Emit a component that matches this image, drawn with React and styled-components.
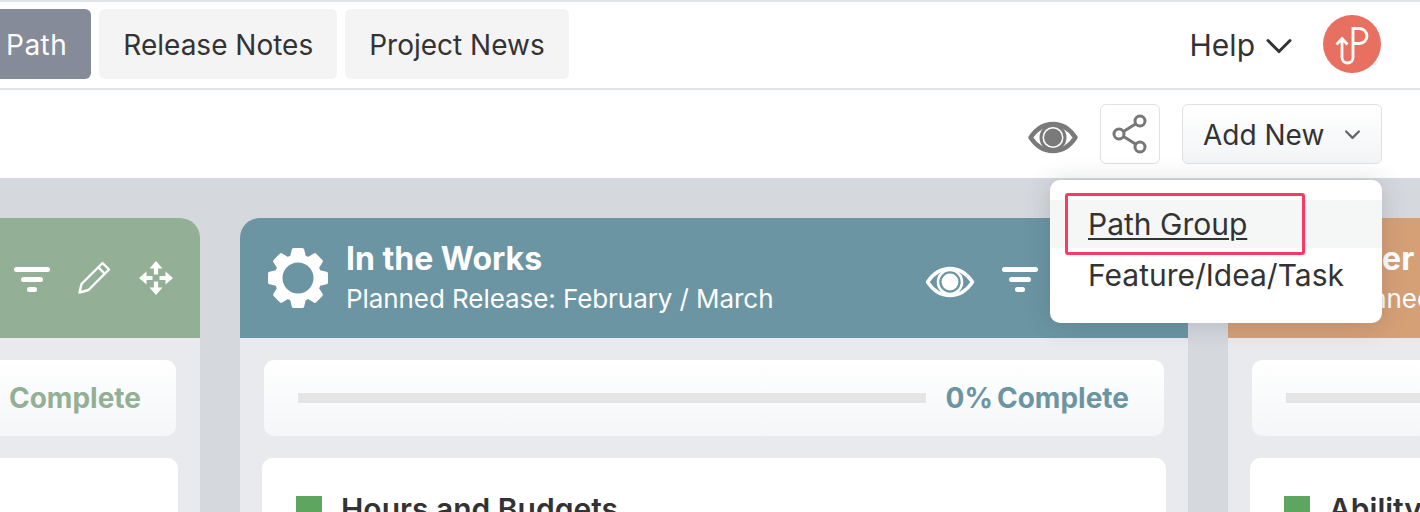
import React from 'react';
import styled, { createGlobalStyle } from 'styled-components';

const GlobalStyle = createGlobalStyle`
  html, body {
    margin: 0;
    height: 512px;
    overflow: hidden;
    background: #d5d8dd;
    font-family: 'Inter', 'Liberation Sans', sans-serif;
    color: #333;
  }
  * { box-sizing: border-box; }
`;

const Page = styled.div`
  width: 1420px;
  height: 512px;
  overflow: hidden;
  display: flex;
  flex-direction: column;
`;

const TopNav = styled.nav`
  height: 90px;
  flex: none;
  display: flex;
  align-items: center;
  padding: 0 39px 2px 0;
  background: #fff;
  border-top: 2px solid #e1e4e6;
  border-bottom: 2px solid #e1e4e6;
`;

const Tabs = styled.div`
  display: flex;
  gap: 8px;
  margin-left: -18px;
`;

const Tab = styled.a`
  height: 70px;
  padding: 2px 24px 0;
  display: flex;
  align-items: center;
  font-size: 28px;
  letter-spacing: ${p => (p.$active ? '0.5px' : '0')};
  border-radius: 6px;
  background: ${p => (p.$active ? '#858b99' : '#f4f4f4')};
  color: ${p => (p.$active ? '#fff' : '#333')};
`;

const NavRight = styled.div`
  margin-left: auto;
  display: flex;
  align-items: center;
`;

const Help = styled.span`
  font-size: 30px;
  margin: 2px 11px 0 0;
`;

const HelpChevron = styled.span`
  display: flex;
  margin-top: 5px;
`;

const Avatar = styled.svg`
  width: 58px;
  height: 58px;
  margin-left: 31px;
  display: block;
`;

const Toolbar = styled.div`
  height: 88px;
  flex: none;
  background: #fff;
  display: flex;
  align-items: center;
  justify-content: flex-end;
  padding-right: 38px;
  position: relative;
  z-index: 2;
`;

const ToolbarEye = styled.span`
  display: flex;
  margin-top: 7px;
`;

const ShareButton = styled.button`
  width: 60px;
  height: 60px;
  margin: 0 22px;
  padding: 0;
  display: flex;
  align-items: center;
  justify-content: center;
  background: #fff;
  border: 1px solid #dfe1e3;
  border-radius: 6px;
`;

const AddWrap = styled.div`
  position: relative;
`;

const AddButton = styled.button`
  width: 200px;
  height: 60px;
  padding: 2px 21px 0 20px;
  display: flex;
  align-items: center;
  justify-content: space-between;
  font: 400 28px 'Inter', sans-serif;
  color: #333;
  background: linear-gradient(#fff, #f2f4f6);
  border: 1px solid #dfe1e3;
  border-radius: 6px;
`;

const Dropdown = styled.div`
  position: absolute;
  top: 76px;
  right: 0;
  width: 332px;
  padding: 20px 0 24px;
  background: #fff;
  border-radius: 10px;
  box-shadow: 0 2px 26px rgba(40, 50, 60, 0.18);
`;

const MenuItem = styled.a`
  height: 48px;
  display: flex;
  align-items: center;
  padding-left: 38px;
  font-size: 30px;
  color: #333;
  background: ${p => (p.$hover ? '#f5f7f7' : 'transparent')};
  text-decoration: ${p => (p.$hover ? 'underline' : 'none')};
  text-underline-offset: 3px;
  text-decoration-thickness: 2px;
  & + & { margin-top: 3px; }
`;

const Highlight = styled.div`
  position: absolute;
  left: 15px;
  top: 13px;
  width: 240px;
  height: 62px;
  border: 3px solid #fb3a63;
  border-radius: 3px;
`;

const Board = styled.div`
  flex: 1;
  display: flex;
  gap: 40px;
  padding-top: 40px;
  margin-left: -748px;
  background: #d5d8dd;
`;

const Column = styled.section`
  width: 948px;
  flex: none;
`;

const ColumnHead = styled.header`
  height: 120px;
  display: flex;
  align-items: center;
  padding: 0 27px 0 28px;
  background: ${p => p.$color};
  border-radius: 20px 20px 0 0;
  color: #fff;
`;

const HeadText = styled.div`
  margin-left: 18px;
  flex: 1;
  min-width: 0;
`;

const HeadTitle = styled.h2`
  margin: 0;
  font-size: 32px;
  line-height: 36px;
  font-weight: 700;
`;

const HeadSub = styled.div`
  font-size: 26px;
  letter-spacing: -0.07px;
  line-height: 32px;
  margin-top: 6px;
  white-space: nowrap;
`;

const HeadIcons = styled.div`
  display: flex;
  align-items: center;
  gap: 28px;
`;

const IconSlot = styled.span`
  display: flex;
  transform: translateY(${p => p.$dy || 0}px);
  margin-right: ${p => p.$mr || 0}px;
`;

const ColumnBody = styled.div`
  height: 200px;
  padding: 22px;
  background: #e9eaee;
`;

const ProgressCard = styled.div`
  height: 76px;
  margin: 0 2px;
  padding: 0 35px 0 34px;
  display: flex;
  align-items: center;
  gap: 20px;
  border-radius: 10px;
  background: linear-gradient(#fff, #f4f6f8);
`;

const Track = styled.div`
  flex: 1;
  height: 10px;
  margin-top: -1px;
  background: #e5e5e5;
`;

const Percent = styled.span`
  font-size: 28px;
  font-weight: 700;
  word-spacing: -2.5px;
  color: ${p => p.$color};
`;

const ItemCard = styled.div`
  margin-top: 22px;
  height: 200px;
  padding: 38px 34px;
  background: #fff;
  border-radius: 10px;
  display: flex;
  align-items: flex-start;
  gap: 19px;
`;

const Square = styled.span`
  width: 26px;
  height: 26px;
  flex: none;
  background: #5ea55f;
`;

const ItemTitle = styled.span`
  font-size: 30px;
  line-height: 26px;
  font-weight: 600;
  white-space: nowrap;
`;

const EyeIcon = ({ color = '#fff', heavy }) => (
  <svg width="50" height="33" viewBox="0 0 50 33" fill="none">
    <path
      d="M2.5 16.5C8.500 7.500 16 3 25 3s16.500 4.500 22.500 13.500C41.500 25.500 34 30 25 30S8.500 25.500 2.500 16.500Z"
      stroke={color}
      strokeWidth={heavy ? 4.4 : 3.4}
      strokeLinejoin="round"
    />
    <circle cx="25" cy="16.500" r="12" stroke={color} strokeWidth={heavy ? 3 : 2.6} />
    <circle cx="25" cy="16.500" r={heavy ? 9 : 8.4} fill={color} />
  </svg>
);

const FilterIcon = () => (
  <svg width="36" height="26" viewBox="0 0 36 26" fill="#fff">
    <rect x="0" y="0" width="36" height="5" rx="2.500" />
    <rect x="7" y="10" width="22" height="5" rx="2.500" />
    <rect x="13" y="20" width="10" height="5" rx="2.500" />
  </svg>
);

const PencilIcon = () => (
  <svg width="34" height="34" viewBox="0 0 34 34" fill="none" stroke="#fff" strokeWidth="2.400" strokeLinejoin="round">
    <path d="M25.500 2 32 8.500 11.500 29 2.500 31.500 4.500 23Z" />
    <path d="M21.500 6.500 28 13" />
  </svg>
);

const MoveIcon = () => (
  <svg width="34" height="34" viewBox="0 0 34 34" fill="#fff">
    <path d="M17 0l6.500 7.500h-4.400v6h-4.200v-6H10.500z" />
    <path d="M17 34l6.500-7.500h-4.400v-6h-4.200v6H10.500z" />
    <path d="M0 17l7.500-6.500v4.400h6v4.200h-6v4.400z" />
    <path d="M34 17l-7.500-6.500v4.400h-6v4.200h6v4.400z" />
  </svg>
);

const GearIcon = () => (
  <svg width="60" height="60" viewBox="0 0 60 60" fill="#fff" style={{ flex: 'none' }}>
    {[0, 45, 90, 135, 180, 225, 270, 315].map(angle => (
      <path
        key={angle}
        d="M22 9 23.800 1.500Q24 0 25.800 0h8.400q1.800 0 2 1.500L38 9Z"
        transform={`rotate(${angle} 30 30)`}
      />
    ))}
    <circle cx="30" cy="30" r="19.500" fill="none" stroke="#fff" strokeWidth="8" />
  </svg>
);

const ChevronIcon = ({ size = 26, width = 3, color = '#333' }) => (
  <svg width={size} height={size * 0.62} viewBox="0 0 26 16" fill="none" stroke={color} strokeWidth={width} strokeLinecap="round" strokeLinejoin="round">
    <path d="M2 2.500 13 13.500 24 2.500" />
  </svg>
);

const ShareIcon = () => (
  <svg width="36" height="40" viewBox="0 0 36 40" fill="none" stroke="#777" strokeWidth="3">
    <circle cx="28" cy="7" r="5" />
    <circle cx="7" cy="20" r="5" />
    <circle cx="28" cy="33" r="5" />
    <path d="M11.500 17.500 23.500 10M11.500 22.500 23.500 30" />
  </svg>
);

const headIcons = [
  <IconSlot key="f" $dy={2} $mr={-1}><FilterIcon /></IconSlot>,
  <IconSlot key="p"><PencilIcon /></IconSlot>,
  <IconSlot key="m"><MoveIcon /></IconSlot>,
];

// the left column runs off the page, only its right end shows
const columns = [
  {
    id: 'next',
    color: '#93b096',
    percent: 'Complete',
    icons: headIcons,
  },
  {
    id: 'works',
    color: '#6b95a3',
    title: 'In the Works',
    sub: 'Planned Release: February / March',
    percent: '0% Complete',
    item: 'Hours and Budgets',
    icons: [<IconSlot key="e" $dy={3.5} $mr={-1}><EyeIcon /></IconSlot>, ...headIcons],
  },
  {
    id: 'later',
    color: '#d6a077',
    title: 'Later',
    sub: 'Planned',
    percent: '',
    item: 'Ability',
    icons: [],
  },
];

export default function App() {
  return (
    <Page>
      <GlobalStyle />
      <TopNav>
        <Tabs>
          <Tab $active>Path</Tab>
          <Tab>Release Notes</Tab>
          <Tab>Project News</Tab>
        </Tabs>
        <NavRight>
          <Help>Help</Help>
          <HelpChevron><ChevronIcon /></HelpChevron>
          <Avatar viewBox="0 0 58 58">
            <circle cx="29" cy="29" r="29" fill="#e87061" />
            <path
              d="M13.500 29.500 19 23.500l5.500 6M19 24v18.500a5.500 5.500 0 0 0 11 0V13.500h6.500a7.500 7.500 0 0 1 0 15H30"
              fill="none"
              stroke="#fff"
              strokeWidth="2.800"
            />
          </Avatar>
        </NavRight>
      </TopNav>
      <Toolbar>
        <ToolbarEye><EyeIcon color="#7a7a7a" heavy /></ToolbarEye>
        <ShareButton>
          <ShareIcon />
        </ShareButton>
        <AddWrap>
          <AddButton>
            Add New
            <ChevronIcon size={15} width={4} color="#666" />
          </AddButton>
          <Dropdown>
            <MenuItem $hover>Path Group</MenuItem>
            <MenuItem>Feature/Idea/Task</MenuItem>
            <Highlight />
          </Dropdown>
        </AddWrap>
      </Toolbar>
      <Board>
        {columns.map(col => (
          <Column key={col.id}>
            <ColumnHead $color={col.color}>
              <GearIcon />
              <HeadText>
                <HeadTitle>{col.title}</HeadTitle>
                <HeadSub>{col.sub}</HeadSub>
              </HeadText>
              <HeadIcons>{col.icons}</HeadIcons>
            </ColumnHead>
            <ColumnBody>
              <ProgressCard>
                <Track />
                <Percent $color={col.color}>{col.percent}</Percent>
              </ProgressCard>
              <ItemCard>
                {col.item && <Square />}
                {col.item && <ItemTitle>{col.item}</ItemTitle>}
              </ItemCard>
            </ColumnBody>
          </Column>
        ))}
      </Board>
    </Page>
  );
}
